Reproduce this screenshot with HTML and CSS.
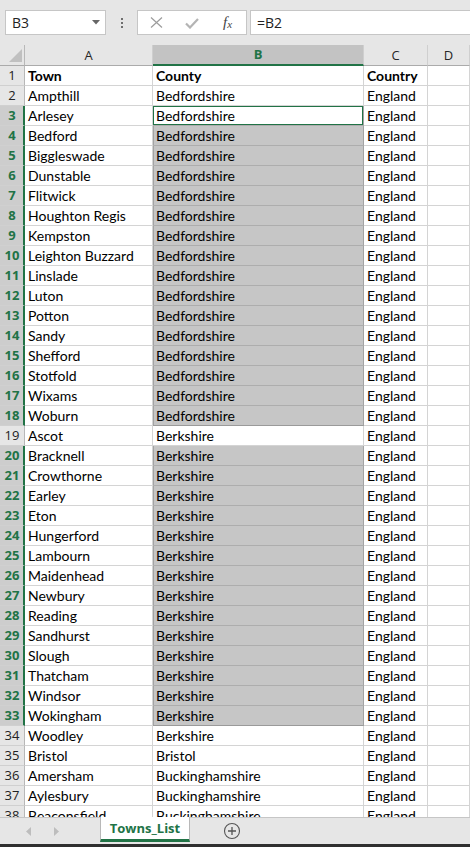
FILE: index.html
```html
<!DOCTYPE html>
<html>
<head>
<meta charset="utf-8">
<link rel="stylesheet" href="styles.css">
</head>
<body>
<div class="app">
  <div class="fbar">
    <div class="namebox">
      <span class="nb-text">B3</span>
      <svg class="nb-arrow" width="8" height="5" viewBox="0 0 8 5"><path d="M0 0H8L4 4.5Z" fill="#666"/></svg>
    </div>
    <div class="dots"><i></i><i></i><i></i></div>
    <div class="fxbox">
      <svg class="ic-x" width="13" height="11" viewBox="0 0 13 11"><path d="M1 0.5L12 10.5M12 0.5L1 10.5" stroke="#9c9c9c" stroke-width="1.2" fill="none"/></svg>
      <svg class="ic-ok" width="14" height="11" viewBox="0 0 14 11"><path d="M1 5.5L5 9.5L13 1" stroke="#b4b4b4" stroke-width="2.2" fill="none"/></svg>
      <span class="ic-fx">f<sub>x</sub></span>
    </div>
    <div class="finput">=B2</div>
  </div>

  <div class="sheet">
    <div class="row hdr">
      <div class="rh corner"><svg width="13" height="13" viewBox="0 0 13 13"><path d="M13 0V13H0Z" fill="#c0c0c0"/></svg></div>
      <div class="c">A</div>
      <div class="c csel">B</div>
      <div class="c">C</div>
      <div class="c">D</div>
    </div>
    <div class="row"><div class="rh">1</div><div class="c bold">Town</div><div class="c bold">County</div><div class="c bold">Country</div><div class="c"></div></div>
    <div class="row"><div class="rh">2</div><div class="c">Ampthill</div><div class="c">Bedfordshire</div><div class="c">England</div><div class="c"></div></div>
    <div class="row sr"><div class="rh">3</div><div class="c">Arlesey</div><div class="c active">Bedfordshire</div><div class="c">England</div><div class="c"></div></div>
    <div class="row sr"><div class="rh">4</div><div class="c">Bedford</div><div class="c s">Bedfordshire</div><div class="c">England</div><div class="c"></div></div>
    <div class="row sr"><div class="rh">5</div><div class="c">Biggleswade</div><div class="c s">Bedfordshire</div><div class="c">England</div><div class="c"></div></div>
    <div class="row sr"><div class="rh">6</div><div class="c">Dunstable</div><div class="c s">Bedfordshire</div><div class="c">England</div><div class="c"></div></div>
    <div class="row sr"><div class="rh">7</div><div class="c">Flitwick</div><div class="c s">Bedfordshire</div><div class="c">England</div><div class="c"></div></div>
    <div class="row sr"><div class="rh">8</div><div class="c">Houghton Regis</div><div class="c s">Bedfordshire</div><div class="c">England</div><div class="c"></div></div>
    <div class="row sr"><div class="rh">9</div><div class="c">Kempston</div><div class="c s">Bedfordshire</div><div class="c">England</div><div class="c"></div></div>
    <div class="row sr"><div class="rh">10</div><div class="c">Leighton Buzzard</div><div class="c s">Bedfordshire</div><div class="c">England</div><div class="c"></div></div>
    <div class="row sr"><div class="rh">11</div><div class="c">Linslade</div><div class="c s">Bedfordshire</div><div class="c">England</div><div class="c"></div></div>
    <div class="row sr"><div class="rh">12</div><div class="c">Luton</div><div class="c s">Bedfordshire</div><div class="c">England</div><div class="c"></div></div>
    <div class="row sr"><div class="rh">13</div><div class="c">Potton</div><div class="c s">Bedfordshire</div><div class="c">England</div><div class="c"></div></div>
    <div class="row sr"><div class="rh">14</div><div class="c">Sandy</div><div class="c s">Bedfordshire</div><div class="c">England</div><div class="c"></div></div>
    <div class="row sr"><div class="rh">15</div><div class="c">Shefford</div><div class="c s">Bedfordshire</div><div class="c">England</div><div class="c"></div></div>
    <div class="row sr"><div class="rh">16</div><div class="c">Stotfold</div><div class="c s">Bedfordshire</div><div class="c">England</div><div class="c"></div></div>
    <div class="row sr"><div class="rh">17</div><div class="c">Wixams</div><div class="c s">Bedfordshire</div><div class="c">England</div><div class="c"></div></div>
    <div class="row sr"><div class="rh">18</div><div class="c">Woburn</div><div class="c s send">Bedfordshire</div><div class="c">England</div><div class="c"></div></div>
    <div class="row"><div class="rh">19</div><div class="c">Ascot</div><div class="c">Berkshire</div><div class="c">England</div><div class="c"></div></div>
    <div class="row sr"><div class="rh">20</div><div class="c">Bracknell</div><div class="c s">Berkshire</div><div class="c">England</div><div class="c"></div></div>
    <div class="row sr"><div class="rh">21</div><div class="c">Crowthorne</div><div class="c s">Berkshire</div><div class="c">England</div><div class="c"></div></div>
    <div class="row sr"><div class="rh">22</div><div class="c">Earley</div><div class="c s">Berkshire</div><div class="c">England</div><div class="c"></div></div>
    <div class="row sr"><div class="rh">23</div><div class="c">Eton</div><div class="c s">Berkshire</div><div class="c">England</div><div class="c"></div></div>
    <div class="row sr"><div class="rh">24</div><div class="c">Hungerford</div><div class="c s">Berkshire</div><div class="c">England</div><div class="c"></div></div>
    <div class="row sr"><div class="rh">25</div><div class="c">Lambourn</div><div class="c s">Berkshire</div><div class="c">England</div><div class="c"></div></div>
    <div class="row sr"><div class="rh">26</div><div class="c">Maidenhead</div><div class="c s">Berkshire</div><div class="c">England</div><div class="c"></div></div>
    <div class="row sr"><div class="rh">27</div><div class="c">Newbury</div><div class="c s">Berkshire</div><div class="c">England</div><div class="c"></div></div>
    <div class="row sr"><div class="rh">28</div><div class="c">Reading</div><div class="c s">Berkshire</div><div class="c">England</div><div class="c"></div></div>
    <div class="row sr"><div class="rh">29</div><div class="c">Sandhurst</div><div class="c s">Berkshire</div><div class="c">England</div><div class="c"></div></div>
    <div class="row sr"><div class="rh">30</div><div class="c">Slough</div><div class="c s">Berkshire</div><div class="c">England</div><div class="c"></div></div>
    <div class="row sr"><div class="rh">31</div><div class="c">Thatcham</div><div class="c s">Berkshire</div><div class="c">England</div><div class="c"></div></div>
    <div class="row sr"><div class="rh">32</div><div class="c">Windsor</div><div class="c s">Berkshire</div><div class="c">England</div><div class="c"></div></div>
    <div class="row sr"><div class="rh">33</div><div class="c">Wokingham</div><div class="c s send">Berkshire</div><div class="c">England</div><div class="c"></div></div>
    <div class="row"><div class="rh">34</div><div class="c">Woodley</div><div class="c">Berkshire</div><div class="c">England</div><div class="c"></div></div>
    <div class="row"><div class="rh">35</div><div class="c">Bristol</div><div class="c">Bristol</div><div class="c">England</div><div class="c"></div></div>
    <div class="row"><div class="rh">36</div><div class="c">Amersham</div><div class="c">Buckinghamshire</div><div class="c">England</div><div class="c"></div></div>
    <div class="row"><div class="rh">37</div><div class="c">Aylesbury</div><div class="c">Buckinghamshire</div><div class="c">England</div><div class="c"></div></div>
    <div class="row"><div class="rh">38</div><div class="c">Beaconsfield</div><div class="c">Buckinghamshire</div><div class="c">England</div><div class="c"></div></div>
  </div>

  <div class="tabs">
    <svg class="nav" width="6" height="9" viewBox="0 0 6 9"><path d="M5 0V9L0 4.5Z" fill="#bdbdbd"/></svg>
    <svg class="nav nav2" width="6" height="9" viewBox="0 0 6 9"><path d="M1 0V9L6 4.5Z" fill="#bdbdbd"/></svg>
    <div class="tab">Towns_List</div>
    <svg class="plus" width="18" height="18" viewBox="0 0 18 18"><circle cx="9" cy="9" r="7.5" stroke="#555" stroke-width="1.1" fill="none"/><path d="M9 5V13M5 9H13" stroke="#555" stroke-width="1.3"/></svg>
  </div>
  <div class="strip"></div>
</div>
</body>
</html>
```

FILE: styles.css
```css
html, body {
  margin: 0;
  padding: 0;
}
body {
  width: 470px;
  height: 847px;
  overflow: hidden;
  background: #ffffff;
  font-family: Lato, "Liberation Sans", sans-serif;
}
.app {
  display: flex;
  flex-direction: column;
  height: 847px;
}

/* formula bar */
.fbar {
  height: 45px;
  flex: none;
  background: #e6e6e6;
  display: flex;
  align-items: flex-start;
  padding: 10px 0 0 5px;
  box-sizing: border-box;
}
.namebox {
  width: 101px;
  height: 25px;
  box-sizing: border-box;
  background: #fff;
  border: 1px solid #c6c6c6;
  display: flex;
  align-items: center;
  padding-left: 6px;
  font-family: "Open Sans", "Noto Sans", sans-serif;
  font-size: 14px;
  color: #222;
}
.nb-text { flex: 1; }
.nb-arrow { margin-right: 5px; }
.dots {
  width: 31px;
  height: 25px;
  display: flex;
  flex-direction: column;
  align-items: center;
  justify-content: center;
  gap: 2px;
}
.dots i {
  display: block;
  width: 2px;
  height: 2px;
  background: #6e6e6e;
}
.fxbox {
  width: 110px;
  height: 25px;
  box-sizing: border-box;
  background: #fff;
  border: 1px solid #c6c6c6;
  display: flex;
  align-items: center;
  padding-left: 12px;
}
.ic-x { margin-right: 22px; }
.ic-ok { margin-right: 24px; margin-top: 1px; }
.ic-fx {
  font-family: "Liberation Serif", serif;
  font-style: italic;
  font-size: 15px;
  color: #444;
  line-height: 1;
}
.ic-fx sub {
  font-size: 11px;
  vertical-align: 0;
  position: relative;
  top: 1px;
}
.finput {
  flex: 1;
  margin-left: 3px;
  margin-right: -2px;
  height: 25px;
  box-sizing: border-box;
  background: #fff;
  border: 1px solid #c6c6c6;
  display: flex;
  align-items: center;
  padding-left: 6px;
  font-family: "Open Sans", "Noto Sans", sans-serif;
  font-size: 14px;
  color: #222;
}

/* sheet */
.sheet {
  flex: 1;
  overflow: hidden;
  background: #fff;
}
.row {
  display: grid;
  grid-template-columns: 25px 128px 211px 64px 1fr;
  height: 20px;
}
.c, .rh {
  box-sizing: border-box;
  border-right: 1px solid #d4d4d4;
  border-bottom: 1px solid #d4d4d4;
  height: 20px;
  white-space: nowrap;
  overflow: hidden;
}
.c {
  font-size: 14px;
  color: #000;
  padding-left: 3px;
  line-height: 20px;
}
.bold { font-weight: 700; }
.rh {
  background: #e6e6e6;
  font-family: "Open Sans", "Noto Sans", sans-serif;
  font-size: 13px;
  color: #222;
  text-align: center;
  line-height: 19px;
  border-right-color: #b8b8b8;
  border-bottom-color: #d0d0d0;
}
.sr .rh {
  background: #cdcdcd;
  color: #217346;
  font-weight: 700;
  border-right: 2px solid #217346;
  padding-left: 1px;
}

/* header row */
.hdr { height: 21px; }
.hdr .c, .hdr .rh {
  height: 21px;
  background: #e6e6e6;
  font-family: "Open Sans", "Noto Sans", sans-serif;
  font-size: 13px;
  color: #262626;
  text-align: center;
  line-height: 20px;
  padding-left: 0;
  border-bottom: 1px solid #ababab;
  border-right-color: #cfcfcf;
}
.hdr .corner {
  display: flex;
  align-items: flex-end;
  justify-content: flex-end;
  padding: 0 2px 3px 0;
  border-right-color: #b8b8b8;
}
.hdr .csel {
  background: #c3c3c3;
  color: #217346;
  font-weight: 700;
  border-bottom: 2px solid #217346;
  line-height: 19px;
}

/* selection */
.c.s {
  background: #c6c6c6;
  border-bottom-color: #adadad;
  border-right-color: #a3a3a3;
  box-shadow: inset 1px 0 0 #a3a3a3;
}
.c.send { border-bottom-color: #9a9a9a; }
.c.active {
  background: #fff;
  border-right-color: #a3a3a3;
  border-bottom-color: #adadad;
  box-shadow: inset 0 0 0 1px #217346;
}

/* tabs */
.tabs {
  height: 27px;
  flex: none;
  box-sizing: border-box;
  background: #e6e6e6;
  border-top: 1px solid #c6c6c6;
  display: flex;
  align-items: center;
}
.nav { margin-left: 26px; }
.nav2 { margin-left: 21px; }
.tab {
  align-self: flex-start;
  margin-top: -1px;
  margin-left: 41px;
  width: 90px;
  height: 25px;
  box-sizing: border-box;
  background: #fff;
  border-left: 1px solid #b8b8b8;
  border-right: 1px solid #b8b8b8;
  border-bottom: 3px solid #217346;
  text-align: center;
  font-family: "Open Sans", "Noto Sans", sans-serif;
  font-weight: 700;
  font-size: 13px;
  color: #217346;
  line-height: 22px;
}
.plus { margin-left: 33px; }
.strip {
  height: 3px;
  flex: none;
  background: #2f2f2f;
}
```
